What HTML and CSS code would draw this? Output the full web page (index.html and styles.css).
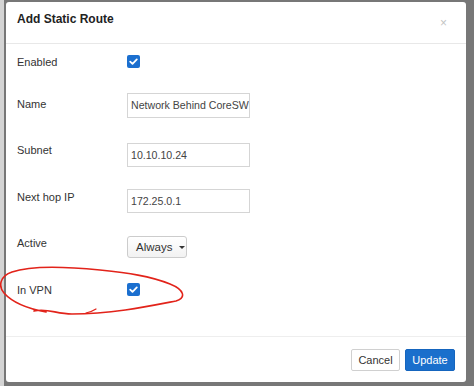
FILE: index.html
```html
<!DOCTYPE html>
<html>
<head>
<meta charset="utf-8">
<link rel="stylesheet" href="styles.css">
</head>
<body>
<div class="frame">
  <div class="modal">
    <div class="modal-header">
      <h4 class="title">Add Static Route</h4>
      <span class="close">×</span>
    </div>
    <div class="modal-body">
      <div class="row r-enabled">
        <label class="lbl lbl-check">Enabled</label>
        <span class="checkbox"><svg viewBox="0 0 13 13" width="13" height="13"><path d="M3.2 6.6 L5.5 8.8 L9.8 4.4" fill="none" stroke="#fff" stroke-width="1.8" stroke-linecap="round" stroke-linejoin="round"/></svg></span>
      </div>
      <div class="row r-name">
        <label class="lbl">Name</label>
        <div class="input tall">Network Behind CoreSW</div>
      </div>
      <div class="row r-subnet">
        <label class="lbl">Subnet</label>
        <div class="input">10.10.10.24</div>
      </div>
      <div class="row r-hop">
        <label class="lbl">Next hop IP</label>
        <div class="input">172.25.0.1</div>
      </div>
      <div class="row r-active">
        <label class="lbl">Active</label>
        <div class="dropdown">Always <span class="caret"></span></div>
      </div>
      <div class="row r-vpn">
        <label class="lbl lbl-check">In VPN</label>
        <span class="checkbox"><svg viewBox="0 0 13 13" width="13" height="13"><path d="M3.2 6.6 L5.5 8.8 L9.8 4.4" fill="none" stroke="#fff" stroke-width="1.8" stroke-linecap="round" stroke-linejoin="round"/></svg></span>
      </div>
    </div>
    <div class="modal-footer">
      <button class="btn btn-default">Cancel</button>
      <button class="btn btn-primary">Update</button>
    </div>
  </div>
</div>
<svg class="scribble" width="474" height="386" viewBox="0 0 474 386">
  <path d="M34 311 C 48 308, 56 314, 72 314 C 112 314, 150 306, 176 301 C 186 298, 185 290, 170 284 C 150 276, 128 273, 100 270 C 70 267, 32 265, 12 272 C 0 276, -2 286, 4 293 C 12 302, 24 308, 46 312" fill="none" stroke="#e2231a" stroke-width="1.6" stroke-linecap="round"/>
  <path d="M86 313 C 90 312, 93 311, 96 309" fill="none" stroke="#e2231a" stroke-width="1.2" stroke-linecap="round"/>
</svg>
</body>
</html>
```
FILE: styles.css
```css
html, body {
  margin: 0;
  padding: 0;
}
body {
  width: 474px;
  height: 386px;
  overflow: hidden;
  background: #6f6f6f;
  font-family: "Liberation Sans", Arial, sans-serif;
  font-size: 11px;
  color: #333;
  position: relative;
}
.frame {
  box-sizing: border-box;
  height: 386px;
  padding: 2px 8px 4px 2px;
  border-left: 4px solid #d4d4d4;
  background: #777;
}
.modal {
  background: #fff;
  height: 380px;
  border-radius: 3px;
  display: flex;
  flex-direction: column;
}
.modal-header {
  height: 42px;
  border-bottom: 1px solid #e8e8e8;
  box-sizing: border-box;
  display: flex;
  align-items: flex-start;
  justify-content: space-between;
  padding: 10px 19px 0 11px;
}
.title {
  margin: 0;
  font-size: 12px;
  font-weight: bold;
  color: #222;
  line-height: 14px;
}
.close {
  font-size: 12px;
  color: #c4c4c4;
  line-height: 14px;
  margin-top: 4px;
}
.modal-body {
  flex: 1;
  padding: 11px 11px 0 11px;
  display: grid;
  grid-template-rows: 38px 50px 46px 47px 47px auto;
  align-content: start;
}
.row {
  display: flex;
  align-items: flex-start;
}
.lbl {
  width: 110px;
  flex: none;
  line-height: 15px;
  padding-top: 1px;
  color: #333;
}
.r-name .lbl {
  padding-top: 4px;
}
.r-subnet .lbl {
  padding-top: 0;
}
.lbl-check {
  padding-top: 0;
}
.r-active .lbl {
  padding-top: 0;
}
.checkbox {
  width: 13px;
  height: 13px;
  background: #1b6fcf;
  border-radius: 2px;
  display: block;
}
.checkbox svg {
  display: block;
}
.input {
  box-sizing: border-box;
  width: 123px;
  height: 24px;
  border: 1px solid #d5d5d5;
  padding: 0 2px 0 3px;
  line-height: 22px;
  font-size: 10.6px;
  color: #444;
  white-space: nowrap;
  overflow: hidden;
}
.input.tall {
  height: 25px;
  line-height: 23px;
}
.dropdown {
  box-sizing: border-box;
  height: 22px;
  width: 60px;
  border: 1px solid #ccc;
  border-radius: 3px;
  background: linear-gradient(#fff, #f2f2f2);
  line-height: 20px;
  padding-left: 8px;
  font-size: 11.5px;
  color: #333;
}
.caret {
  display: inline-block;
  width: 0;
  height: 0;
  margin-left: 3px;
  vertical-align: middle;
  border-top: 3px solid #333;
  border-left: 3px solid transparent;
  border-right: 3px solid transparent;
}
.modal-footer {
  height: 46px;
  border-top: 1px solid #eee;
  box-sizing: border-box;
  display: flex;
  justify-content: flex-end;
  align-items: flex-start;
  padding: 12px 11px 0 0;
  gap: 5px;
}
.btn {
  height: 22px;
  box-sizing: border-box;
  font-family: "Liberation Sans", Arial, sans-serif;
  font-size: 11px;
  border-radius: 2px;
  padding: 0;
  cursor: pointer;
}
.btn-default {
  width: 49px;
  background: #fff;
  border: 1px solid #d0d0d0;
  color: #333;
}
.btn-primary {
  width: 50px;
  background: #1a6fcc;
  border: 1px solid #1565be;
  color: #fff;
}
.scribble {
  position: absolute;
  left: 0;
  top: 0;
  pointer-events: none;
}
```
